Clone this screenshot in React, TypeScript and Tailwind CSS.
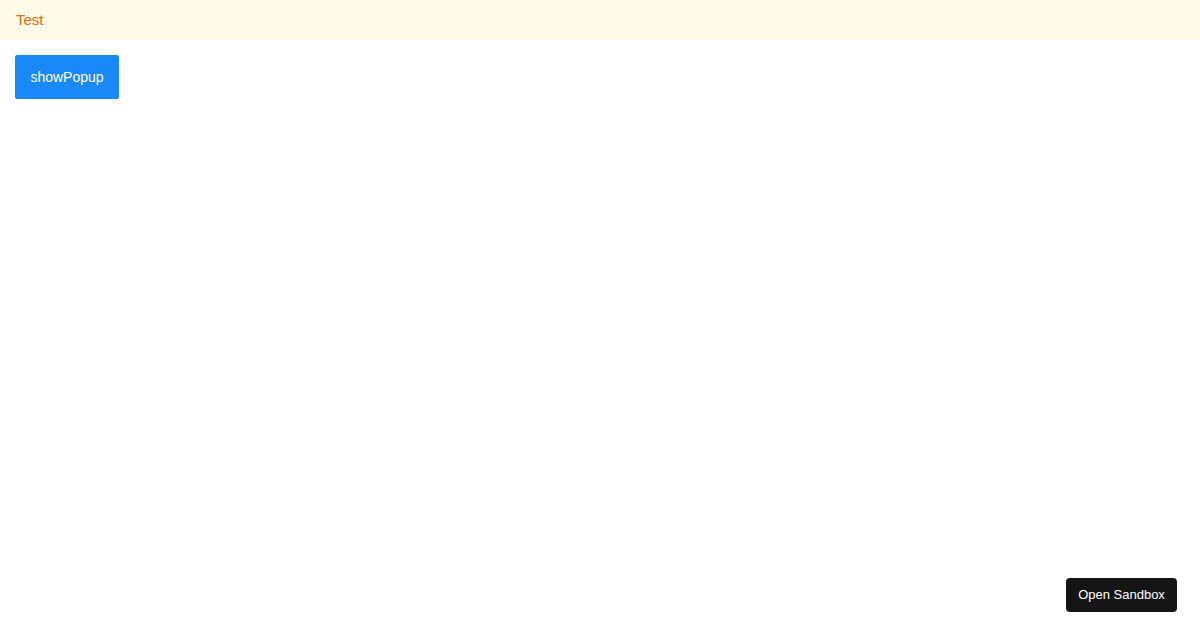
export default function App() {
  return (
    <div className="relative h-[630px] w-full bg-white font-['Liberation_Sans',Arial,sans-serif]">
      <div className="flex h-10 items-center bg-[#fffbe8] px-4 text-[15px] text-[#ed6a0c]">
        Test
      </div>
      <div className="px-[15px] pt-[15px]">
        <button className="h-11 w-[104px] rounded-[2px] border border-[#1989fa] bg-[#1989fa] text-sm text-white">
          showPopup
        </button>
      </div>
      <button className="absolute bottom-[18px] right-[23px] h-[34px] w-[111px] rounded bg-[#151515] text-[13px] text-white">
        Open Sandbox
      </button>
    </div>
  );
}
